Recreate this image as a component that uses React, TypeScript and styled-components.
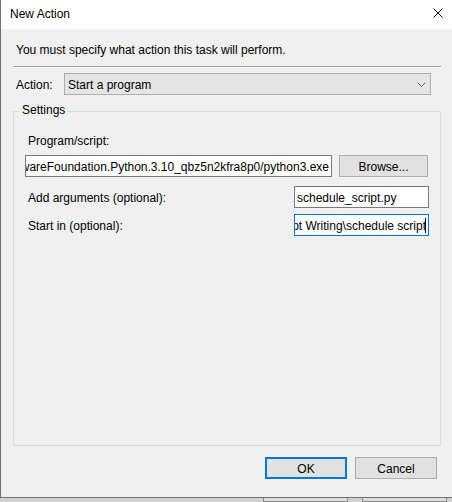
import React from "react";
import styled, { createGlobalStyle } from "styled-components";

const GlobalStyle = createGlobalStyle`
  html, body { margin: 0; padding: 0; background: #d2d2d2; }
  body {
    font-family: "Liberation Sans", Arial, sans-serif;
    font-size: 12px;
    color: #000;
  }
  * { box-sizing: border-box; }
`;

const Window = styled.div`
  width: 452px;
  height: 498px;
  border-left: 1px solid #707070;
  border-bottom: 1px solid #707070;
  background: #f0f0f0;
  display: flex;
  flex-direction: column;
`;

const TitleBar = styled.div`
  height: 29px;
  flex: none;
  background: #ffffff;
  display: flex;
  justify-content: space-between;
  padding: 0 9px 0 9px;
`;

const Title = styled.span`
  line-height: 29px;
`;

const CloseIcon = styled.svg`
  margin-top: 8px;
  width: 10px;
  height: 10px;
`;

const Body = styled.div`
  flex: 1;
  display: flex;
  flex-direction: column;
  padding: 13px 11px 0 12px;
`;

const Instruction = styled.div`
  margin-left: 3px;
  line-height: 16px;
  height: 16px;
`;

const Separator = styled.div`
  margin-top: 8px;
  height: 2px;
  border-top: 1px solid #a0a0a0;
  border-bottom: 1px solid #ffffff;
`;

const ActionRow = styled.div`
  margin-top: 5px;
  display: flex;
  align-items: center;
  height: 22px;
`;

const ActionLabel = styled.span`
  width: 48px;
  margin-left: 3px;
  line-height: 16px;
  padding-top: 1px;
`;

const Combo = styled.div`
  width: 367px;
  height: 22px;
  border: 1px solid #adadad;
  background: #e5e5e5;
  display: flex;
  align-items: center;
  justify-content: space-between;
  padding: 1px 4px 0 3px;
  line-height: 16px;
`;

const Chevron = styled.svg`
  width: 9px;
  height: 5px;
  margin-top: -1px;
`;

const Group = styled.div`
  position: relative;
  margin-top: 16px;
  height: 335px;
  border: 1px solid #dcdcdc;
  padding: 20px 11px 0 11px;
  display: flex;
  flex-direction: column;
`;

const Legend = styled.span`
  position: absolute;
  top: -10px;
  left: 6px;
  padding: 0 2px;
  background: #f0f0f0;
  line-height: 16px;
`;

const FieldLabel = styled.span`
  margin-left: 3px;
  line-height: 16px;
  padding-top: 1px;
`;

const ProgramRow = styled.div`
  margin-top: 6px;
  display: flex;
  gap: 7px;
`;

const FieldRow = styled.div<{ $gap: number }>`
  margin-top: ${(p) => p.$gap}px;
  display: flex;
  align-items: center;
  justify-content: space-between;
  height: 22px;
`;

const TextBox = styled.div<{ $width: number; $focused?: boolean; $alignEnd?: boolean }>`
  width: ${(p) => p.$width}px;
  height: 22px;
  flex: none;
  background: #ffffff;
  border: 1px solid ${(p) => (p.$focused ? "#0078d7" : "#7a7a7a")};
  display: flex;
  align-items: center;
  justify-content: ${(p) => (p.$alignEnd ? "flex-end" : "flex-start")};
  overflow: hidden;
  white-space: nowrap;
  padding: 1px 2px 0 2px;
  line-height: 16px;
`;

const Caret = styled.span`
  flex: none;
  width: 1px;
  height: 15px;
  background: #000;
  margin-left: -1px;
`;

const Button = styled.div<{ $width: number; $default?: boolean }>`
  width: ${(p) => p.$width}px;
  height: 22px;
  flex: none;
  background: #e1e1e1;
  border: ${(p) => (p.$default ? "2px solid #0078d7" : "1px solid #adadad")};
  display: flex;
  align-items: center;
  justify-content: center;
  line-height: 16px;
  padding-top: 1px;
`;

const Footer = styled.div`
  margin-top: 11px;
  display: flex;
  justify-content: flex-end;
  gap: 8px;
  padding-right: 4px;
`;

const BehindStrip = styled.div`
  height: 4px;
  display: flex;
  padding-left: 263px;
  gap: 14px;
`;

const GhostButton = styled.div`
  width: 85px;
  height: 4px;
  border: 1px solid #8a8a8a;
  border-top: none;
  background: #dedede;
`;

export default function App() {
  return (
    <>
      <GlobalStyle />
      <Window>
        <TitleBar>
          <Title>New Action</Title>
          <CloseIcon viewBox="0 0 10 10">
            <path d="M0.5 0.5 L9.5 9.5 M9.5 0.5 L0.5 9.5" stroke="#000" strokeWidth="1" fill="none" />
          </CloseIcon>
        </TitleBar>
        <Body>
          <Instruction>You must specify what action this task will perform.</Instruction>
          <Separator />
          <ActionRow>
            <ActionLabel>Action:</ActionLabel>
            <Combo>
              <span>Start a program</span>
              <Chevron viewBox="0 0 9 5">
                <path d="M0.5 0.5 L4.5 4.5 L8.5 0.5" stroke="#606060" strokeWidth="1" fill="none" />
              </Chevron>
            </Combo>
          </ActionRow>
          <Group>
            <Legend>Settings</Legend>
            <FieldLabel>Program/script:</FieldLabel>
            <ProgramRow>
              <TextBox $width={307} $alignEnd>
                C:\Users\User\AppData\Local\Microsoft\WindowsApps\PythonSoftwareFoundation.Python.3.10_qbz5n2kfra8p0/python3.exe
              </TextBox>
              <Button $width={89}>Browse...</Button>
            </ProgramRow>
            <FieldRow $gap={9}>
              <FieldLabel>Add arguments (optional):</FieldLabel>
              <TextBox $width={135}>schedule_script.py</TextBox>
            </FieldRow>
            <FieldRow $gap={6}>
              <FieldLabel>Start in (optional):</FieldLabel>
              <TextBox $width={135} $focused $alignEnd>
                <span>C:\Users\User\Documents\Script Writing\schedule script</span>
                <Caret />
              </TextBox>
            </FieldRow>
          </Group>
          <Footer>
            <Button $width={82} $default>OK</Button>
            <Button $width={82}>Cancel</Button>
          </Footer>
        </Body>
      </Window>
      <BehindStrip>
        <GhostButton />
        <GhostButton />
      </BehindStrip>
    </>
  );
}
